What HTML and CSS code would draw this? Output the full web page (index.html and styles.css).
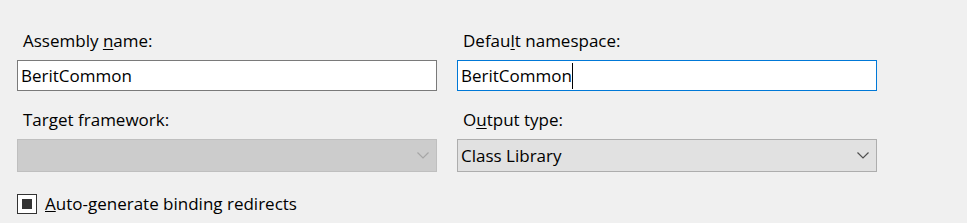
FILE: index.html
```html
<!DOCTYPE html>
<html lang="en">
<head>
    <meta charset="UTF-8">
    <title>Application</title>
    <link rel="stylesheet" href="styles.css">
</head>
<body>
    <div class="panel">
        <div class="grid">
            <div class="field">
                <label class="field-label">Assembly <u>n</u>ame:</label>
                <div class="textbox">BeritCommon</div>
            </div>
            <div class="field">
                <label class="field-label">Defau<u>l</u>t namespace:</label>
                <div class="textbox focused">BeritCommon<span class="caret"></span></div>
            </div>
            <div class="field">
                <label class="field-label">Tar<u>g</u>et framework:</label>
                <div class="combo disabled">
                    <span class="combo-text"></span>
                    <svg class="chevron" width="12" height="7" viewBox="0 0 12 7"><polyline points="0.5,0.5 6,6 11.5,0.5" fill="none" stroke="#a6a6a6" stroke-width="1.2"/></svg>
                </div>
            </div>
            <div class="field">
                <label class="field-label">O<u>u</u>tput type:</label>
                <div class="combo">
                    <span class="combo-text">Class Library</span>
                    <svg class="chevron" width="12" height="7" viewBox="0 0 12 7"><polyline points="0.5,0.5 6,6 11.5,0.5" fill="none" stroke="#505050" stroke-width="1.2"/></svg>
                </div>
            </div>
        </div>
        <div class="check-row">
            <span class="checkbox"><span class="check-mark"></span></span>
            <span class="check-label"><u>A</u>uto-generate binding redirects</span>
        </div>
    </div>
</body>
</html>
```
FILE: styles.css
```css
body {
    margin: 0;
    background-color: #f0f0f0;
    font-family: "Open Sans", "Noto Sans", sans-serif;
    font-size: 17px;
    color: #000;
}

.panel {
    padding: 30px 17px 0 17px;
}

.grid {
    display: grid;
    grid-template-columns: 420px 420px;
    column-gap: 20px;
    row-gap: 18px;
}

.field {
    display: flex;
    flex-direction: column;
}

.field-label {
    height: 22px;
    line-height: 22px;
    padding-left: 6px;
    margin-bottom: 8px;
}

.field-label u {
    text-underline-offset: 2px;
}

.textbox {
    box-sizing: border-box;
    height: 31px;
    line-height: 29px;
    border: 1px solid #7a7a7a;
    background-color: #fff;
    padding: 0 3px;
    display: flex;
    align-items: center;
}

.textbox.focused {
    border-color: #0078d7;
}

.caret {
    display: inline-block;
    width: 1px;
    height: 26px;
    background-color: #000;
}

.combo {
    box-sizing: border-box;
    height: 33px;
    border: 1px solid #adadad;
    background-color: #e1e1e1;
    display: flex;
    align-items: center;
    justify-content: space-between;
    padding: 0 7px 0 3px;
}

.combo.disabled {
    background-color: #cccccc;
    border-color: #bfbfbf;
}

.chevron {
    display: block;
}

.check-row {
    display: flex;
    align-items: center;
    margin-top: 20px;
}

.checkbox {
    box-sizing: border-box;
    width: 20px;
    height: 20px;
    border: 1px solid #333;
    background-color: #fff;
    display: flex;
    align-items: center;
    justify-content: center;
    margin-right: 8px;
}

.check-mark {
    width: 10px;
    height: 10px;
    background-color: #333;
}
```
